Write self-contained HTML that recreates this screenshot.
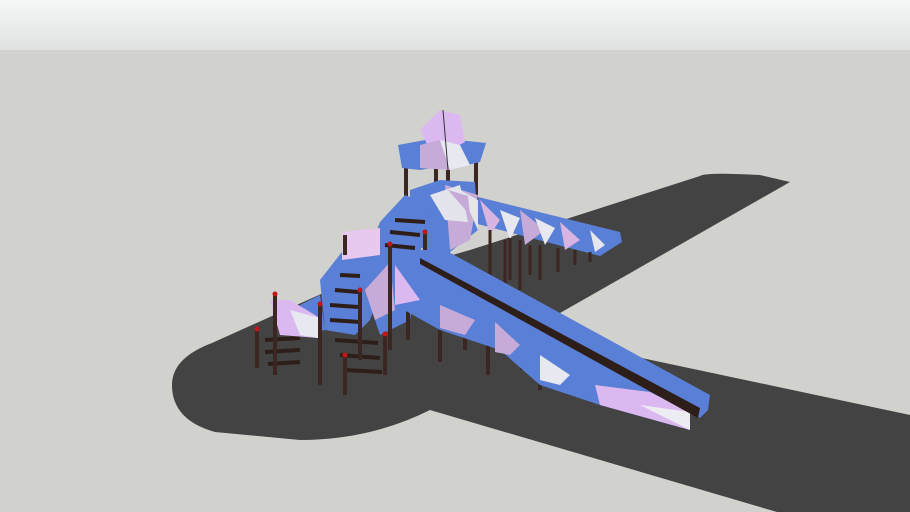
<!DOCTYPE html>
<html><head><style>
html,body{margin:0;padding:0;width:910px;height:512px;overflow:hidden;background:#d3d3cf;}
</style></head><body>
<svg width="910" height="512" viewBox="0 0 910 512" xmlns="http://www.w3.org/2000/svg">
<defs><linearGradient id="sky" x1="0" y1="0" x2="0" y2="1"><stop offset="0" stop-color="#f6f7f7"/><stop offset="1" stop-color="#e0e1e1"/></linearGradient></defs>
<rect x="0" y="0" width="910" height="50" fill="url(#sky)"/>
<rect x="0" y="50" width="910" height="462" fill="#d1d1cd"/>
<!-- shadow -->
<path d="M700,176 Q705,172 760,175 L790,182 L560,313 L637,357 L910,415 L910,512 L777,512 L430,410 Q370,440 300,440 L215,432 Q172,420 172,385 Q172,358 212,343 L330,290 L470,250 Z" fill="#434343"/>
<!-- back walkway -->
<polygon points="470,195 620,232 622,242 600,256 470,222" fill="#5a7fd6"/>
<polygon points="480,200 500,220 490,235" fill="#d8b4e0"/>
<polygon points="520,210 545,230 525,245" fill="#c6abd8"/>
<polygon points="560,222 580,240 565,250" fill="#d8b4e0"/>
<polygon points="590,230 605,245 595,252" fill="#e6e6ee"/>
<polygon points="500,210 520,218 510,240" fill="#e8e8f0"/>
<polygon points="535,218 555,228 545,245" fill="#e8e8f0"/>
<g stroke="#3b2622" stroke-width="3">
<line x1="490" y1="230" x2="490" y2="285"/><line x1="510" y1="238" x2="510" y2="280"/><line x1="520" y1="240" x2="520" y2="290"/><line x1="540" y1="245" x2="540" y2="280"/><line x1="558" y1="248" x2="558" y2="272"/><line x1="575" y1="250" x2="575" y2="265"/><line x1="590" y1="252" x2="590" y2="262"/>
<line x1="505" y1="240" x2="505" y2="290"/><line x1="530" y1="245" x2="530" y2="275"/>
</g>
<!-- tower posts -->
<g stroke="#3b2622" stroke-width="4">
<line x1="406" y1="165" x2="406" y2="225"/><line x1="436" y1="168" x2="436" y2="260"/><line x1="448" y1="170" x2="448" y2="260"/><line x1="476" y1="162" x2="476" y2="225"/>
</g>
<!-- tower body -->
<polygon points="410,190 440,180 475,182 478,230 440,260 410,240" fill="#5a7fd6"/>
<polygon points="445,185 478,195 470,240 450,250" fill="#c6abd8"/>
<polygon points="460,190 478,200 478,230" fill="#e4e4ec"/>
<!-- roof -->
<polygon points="398,145 425,140 450,165 420,170 402,168" fill="#5a7fd6"/>
<polygon points="458,140 486,143 480,162 455,168" fill="#5a7fd6"/>
<polygon points="420,130 440,110 460,115 465,142 450,150 430,150" fill="#dcb8f0"/>
<polygon points="420,145 440,140 450,170 420,168" fill="#c6abd8"/>
<polygon points="440,140 460,145 470,165 450,170" fill="#e8e8f0"/>
<line x1="443" y1="110" x2="448" y2="170" stroke="#333" stroke-width="1"/>
<!-- stair enclosure / main climbing wall -->
<polygon points="380,222 405,195 430,205 420,255 390,265 365,260" fill="#5a7fd6"/>
<polygon points="320,280 345,248 380,245 395,255 370,320 355,335 325,330" fill="#5a7fd6"/>
<polygon points="360,275 395,255 420,262 410,320 380,335" fill="#5a7fd6"/>
<polygon points="365,290 390,262 395,310 375,320" fill="#c6abd8"/>
<polygon points="342,232 380,228 380,255 342,260" fill="#e8c8ee"/>
<polygon points="300,305 320,295 325,330 300,335" fill="#5a7fd6"/>
<!-- stairs -->
<g stroke="#2e1e1a" stroke-width="4">
<line x1="395" y1="220" x2="425" y2="222"/><line x1="390" y1="232" x2="420" y2="235"/><line x1="385" y1="245" x2="415" y2="248"/>
<line x1="340" y1="275" x2="360" y2="276"/><line x1="335" y1="290" x2="358" y2="292"/><line x1="330" y1="305" x2="358" y2="307"/><line x1="330" y1="320" x2="360" y2="322"/>
<line x1="335" y1="340" x2="378" y2="343"/><line x1="340" y1="355" x2="380" y2="358"/><line x1="345" y1="370" x2="382" y2="372"/>
<line x1="265" y1="340" x2="300" y2="338"/><line x1="265" y1="352" x2="300" y2="350"/><line x1="268" y1="364" x2="300" y2="362"/>
</g>
<!-- small landing -->
<polygon points="270,300 290,300 320,318 318,338 280,335" fill="#dcb8f0"/>
<polygon points="290,310 320,318 318,338 300,335" fill="#e8e8f0"/>
<!-- posts -->
<g stroke="#3b2622" stroke-width="4">
<line x1="257" y1="330" x2="257" y2="368"/><line x1="275" y1="295" x2="275" y2="375"/><line x1="320" y1="305" x2="320" y2="385"/><line x1="345" y1="355" x2="345" y2="395"/><line x1="385" y1="335" x2="385" y2="375"/><line x1="360" y1="290" x2="360" y2="360"/><line x1="390" y1="245" x2="390" y2="350"/><line x1="345" y1="235" x2="345" y2="255"/>
<line x1="440" y1="300" x2="440" y2="362"/><line x1="465" y1="315" x2="465" y2="350"/><line x1="488" y1="330" x2="488" y2="375"/><line x1="522" y1="350" x2="522" y2="370"/><line x1="540" y1="365" x2="540" y2="390"/><line x1="408" y1="290" x2="408" y2="340"/><line x1="425" y1="230" x2="425" y2="260"/>
</g>
<g fill="#c01818"><circle cx="275" cy="294" r="2.5"/><circle cx="257" cy="329" r="2.5"/><circle cx="320" cy="304" r="2.5"/><circle cx="345" cy="355" r="2.5"/><circle cx="385" cy="334" r="2.5"/><circle cx="360" cy="290" r="2.5"/><circle cx="390" cy="244" r="2.5"/><circle cx="425" cy="232" r="2.5"/></g>
<!-- slide side panels -->
<polygon points="395,255 420,255 545,320 600,345 690,400 690,430 600,405 540,385 500,350 440,330 395,305" fill="#5a7fd6"/>
<polygon points="395,265 420,300 395,305" fill="#dcb8f0"/>
<polygon points="440,305 475,320 465,335 440,328" fill="#c6abd8"/>
<polygon points="495,322 520,345 510,355 495,352" fill="#c6abd8"/>
<polygon points="540,355 570,375 560,385 540,380" fill="#e8e8f0"/>
<polygon points="595,385 650,392 690,412 690,430 600,405" fill="#dcb8f0"/>
<polygon points="640,405 690,412 690,430" fill="#ececf2"/>
<!-- slide -->
<polygon points="420,250 445,250 710,395 708,410 700,418 420,262" fill="#5a7fd6"/>
<polygon points="420,258 700,408 698,418 420,264" fill="#2e1e1a"/>
<!-- tower front roof/wall accents -->
<polygon points="430,195 460,185 468,222 445,220" fill="#e4e4ec"/>
<polygon points="448,190 468,196 470,215" fill="#c6abd8"/>
</svg>
</body></html>
